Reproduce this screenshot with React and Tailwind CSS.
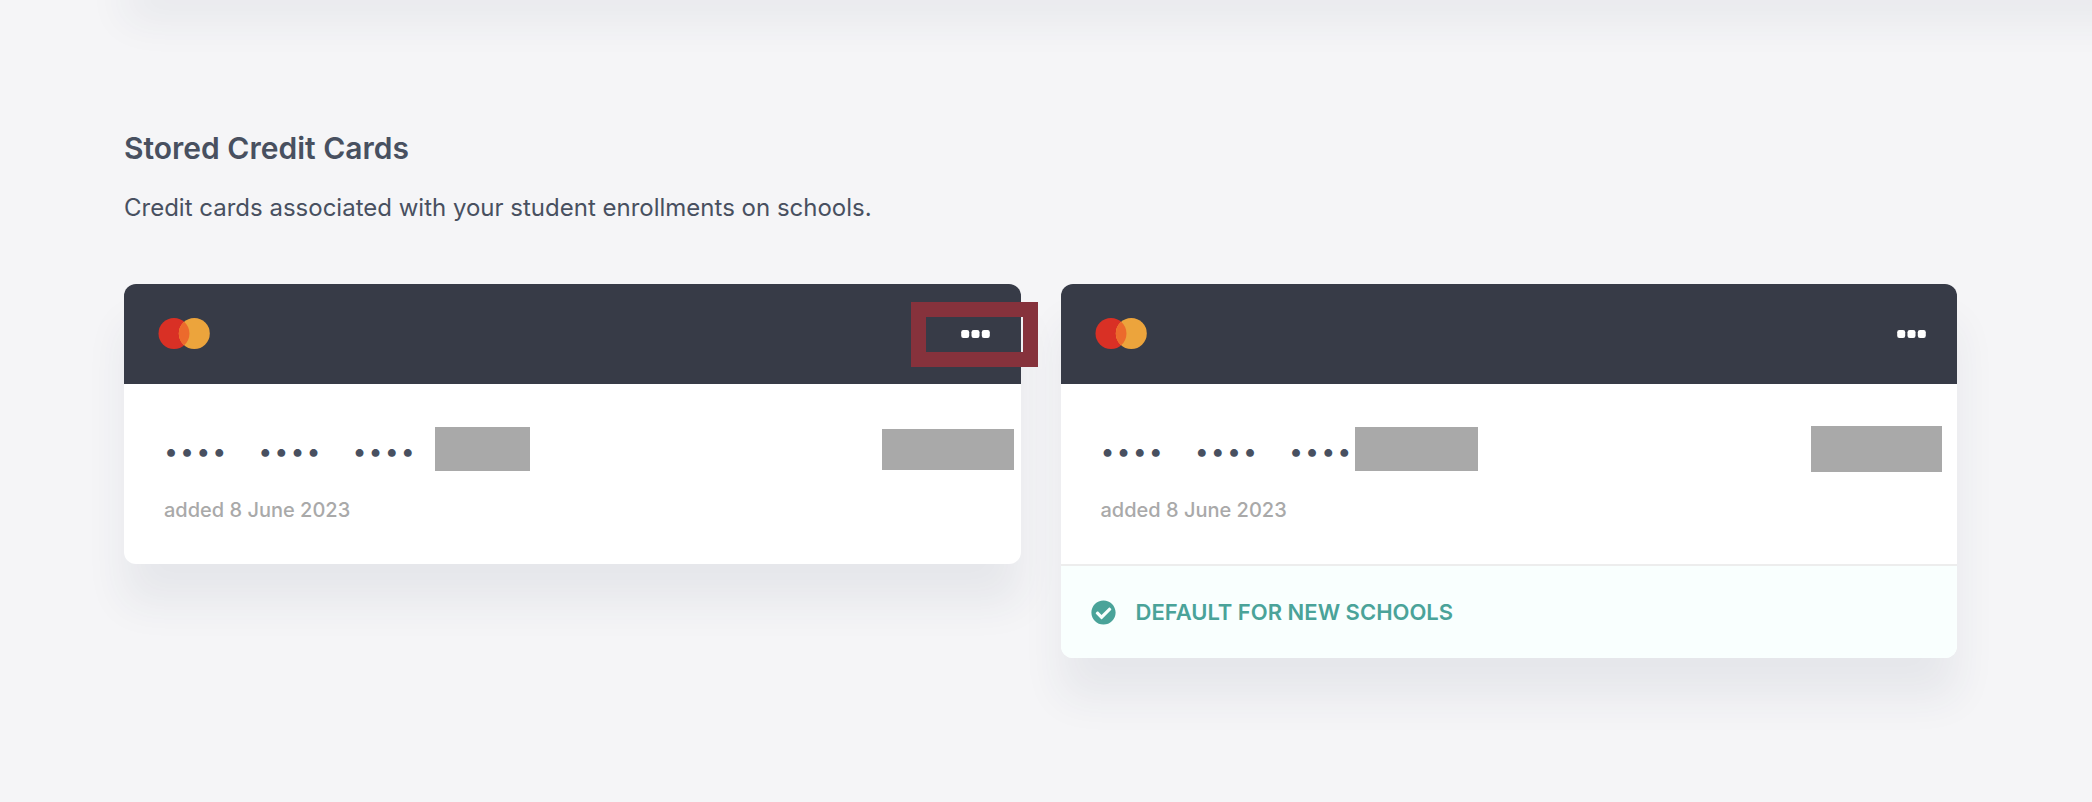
import React from 'react';
import { FaCheckCircle } from 'react-icons/fa';

const cards = [
  {
    id: 'card-1',
    added: 'added 8 June 2023',
    highlighted: true,
    isDefault: false,
    rowStyles: 'pr-[7px]',
    digitsStyles: 'w-[95px] h-11 ml-5',
    expiryStyles: 'w-[132px] h-[41px]',
  },
  {
    id: 'card-2',
    added: 'added 8 June 2023',
    highlighted: false,
    isDefault: true,
    rowStyles: 'pr-[15px]',
    digitsStyles: 'w-[123px] h-11 ml-1',
    expiryStyles: 'w-[131px] h-[46px]',
  },
];

const MastercardLogo = () => (
  <svg width="52" height="32" viewBox="0 0 52 32" role="img" aria-label="Mastercard">
    <circle cx="16" cy="15.5" r="15.5" fill="#d93025" />
    <circle cx="36.3" cy="15.5" r="15.5" fill="#eca43c" />
    <path d="M26.15 3.8a15.5 15.5 0 0 1 0 23.4a15.5 15.5 0 0 1 0-23.4z" fill="#ec6a2c" />
  </svg>
);

const MoreIcon = () => (
  <svg width="29" height="8" viewBox="0 0 29 8" fill="currentColor" aria-hidden="true">
    <rect x="0.2" width="8" height="8" rx="2.2" />
    <rect x="10.5" width="8" height="8" rx="2.2" />
    <rect x="20.8" width="8" height="8" rx="2.2" />
  </svg>
);

const MaskedGroup = () => (
  <span className="flex gap-0.5">
    <span>•</span>
    <span>•</span>
    <span>•</span>
    <span>•</span>
  </span>
);

const CreditCard = ({ card }) => (
  <article className="min-w-0 flex-1 rounded-xl bg-white shadow-[0_40px_42px_rgba(40,50,84,0.07)]">
    <div className="relative flex h-[100px] items-center justify-between rounded-t-xl bg-[#373b47] pl-[34px] pr-[31px]">
      <MastercardLogo />
      <button type="button" aria-label="Card options" className="text-white">
        <MoreIcon />
      </button>
      {card.highlighted && (
        <div className="pointer-events-none absolute -right-[17px] top-[18px] h-[65px] w-[127px] border-[15px] border-[#86323c]" />
      )}
    </div>

    <div className="pb-10 pt-[42px]">
      <div className={`flex h-[46px] items-center justify-between pl-10 ${card.rowStyles}`}>
        <div className="flex items-center">
          <div className="flex gap-8 pt-1 text-[25px] leading-10 text-[#485060]">
            <MaskedGroup />
            <MaskedGroup />
            <MaskedGroup />
          </div>
          <div className={`bg-[#a9a9a9] ${card.digitsStyles}`} />
        </div>
        <div className={`bg-[#a9a9a9] ${card.expiryStyles}`} />
      </div>
      <p className="mt-6 pl-10 text-xl leading-7 font-medium text-[#a9a9a9]">{card.added}</p>
    </div>

    {card.isDefault && (
      <div className="flex h-[94px] items-center gap-5 rounded-b-xl border-t-2 border-[#ededed] bg-[#f9fffe] pl-[30px] text-[#4aa399]">
        <FaCheckCircle size={25} />
        <span className="text-[22px] leading-7 font-semibold uppercase">Default for new schools</span>
      </div>
    )}
  </article>
);

const App = () => (
  <main className="min-h-screen overflow-hidden bg-[#f5f5f7] font-['Inter',sans-serif] text-[#485060]">
    {/* bottom edge of the panel above this section */}
    <div className="-mr-20 ml-[124px] -mt-[60px] h-10 rounded-xl bg-white shadow-[0_40px_42px_rgba(40,50,84,0.07)]" />

    <section className="pb-36 pl-[124px] pr-[135px] pt-[148px]">
      <h2 className="text-[30px] leading-10 font-semibold">Stored Credit Cards</h2>
      <p className="mt-6 text-2xl leading-8">Credit cards associated with your student enrollments on schools.</p>

      <div className="mt-[60px] flex items-start gap-10">
        {cards.map((card) => (
          <CreditCard key={card.id} card={card} />
        ))}
      </div>
    </section>
  </main>
);

export default App;
